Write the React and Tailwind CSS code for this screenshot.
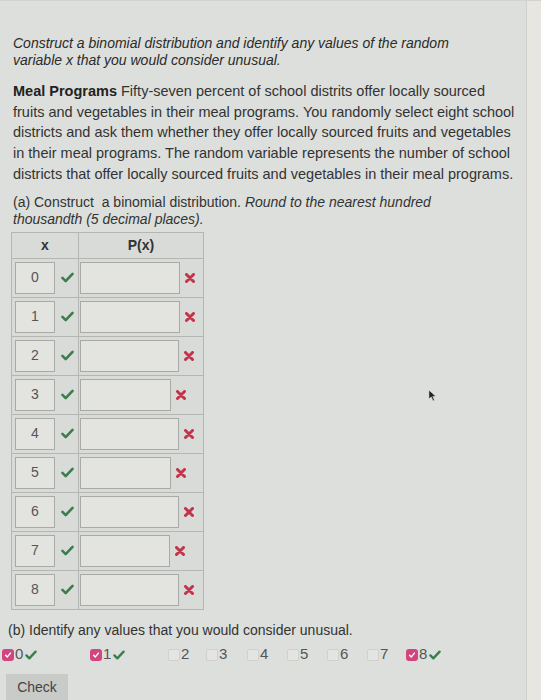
import React from 'react';

const font = { fontFamily: '"Liberation Sans", Arial, sans-serif' };

const Check = ({ className = '' }) => (
  <svg viewBox="0 0 14 12" className={className} fill="none">
    <path d="M1.5 6.5 L5 10 L12.5 2" stroke="#3c7d4c" strokeWidth="2.8" strokeLinecap="round" strokeLinejoin="round" />
  </svg>
);

const Cross = ({ className = '' }) => (
  <svg viewBox="0 0 10 10" className={className} fill="none">
    <path d="M1.5 1.5 L8.5 8.5 M8.5 1.5 L1.5 8.5" stroke="#c4334a" strokeWidth="3" strokeLinecap="round" />
  </svg>
);

const rows = [
  { x: 0, w: 100 },
  { x: 1, w: 100 },
  { x: 2, w: 99 },
  { x: 3, w: 91 },
  { x: 4, w: 99 },
  { x: 5, w: 91 },
  { x: 6, w: 99 },
  { x: 7, w: 90 },
  { x: 8, w: 99 },
];

const choices = [
  { v: 0, on: true, w: 'w-[88px]' },
  { v: 1, on: true, w: 'w-[78px]' },
  { v: 2, on: false, w: 'w-[38px]' },
  { v: 3, on: false, w: 'w-[41px]' },
  { v: 4, on: false, w: 'w-[40px]' },
  { v: 5, on: false, w: 'w-[40px]' },
  { v: 6, on: false, w: 'w-[40px]' },
  { v: 7, on: false, w: 'w-[39px]' },
  { v: 8, on: true, w: 'w-[40px]' },
];

function Row({ r }) {
  return (
    <div className="flex h-[39px] border-t border-[#b3b6b3]">
      <div className="flex w-[67px] items-center border-r border-[#b3b6b3] pl-[3px]">
        <div className="flex h-[32px] w-[40px] items-center justify-center border border-[#a8aaa7] bg-[#e3e4e0] text-[14px] text-[#555]">
          {r.x}
        </div>
        <Check className="ml-[6px] h-[11px] w-[13px]" />
      </div>
      <div className="flex flex-1 items-center pl-[1px]">
        <div className="h-[32px] border border-[#a8aaa7] bg-[#e3e4e0]" style={{ width: r.w }} />
        <Cross className="ml-[5px] h-[10px] w-[10px]" />
      </div>
    </div>
  );
}

export default function App() {
  return (
    <div className="relative flex h-[700px] w-[541px] flex-col overflow-hidden bg-[#e7e5e1] text-[#2b2b2b]" style={font}>
      <div className="h-[11px] border-b border-[#d2d3d0]" />
      <div className="flex flex-1">
        <div className="w-[526px] bg-[#dcdfdb] pl-[13px] pt-[34px]">
          <p className="text-[14px] italic leading-[17px]">
            Construct a binomial distribution and identify any values of the random
            <br />
            variable x that you would consider unusual.
          </p>
          <p className="mt-[12px] text-[14.5px] leading-[20.7px] text-[#333]">
            <strong className="font-bold text-[#222]">Meal Programs</strong> Fifty-seven percent of school distrits offer locally sourced
            <br />
            fruits and vegetables in their meal programs. You randomly select eight school
            <br />
            districts and ask them whether they offer locally sourced fruits and vegetables
            <br />
            in their meal programs. The random variable represents the number of school
            <br />
            districts that offer locally sourced fruits and vegetables in their meal programs.
          </p>
          <p className="mt-[9px] text-[14px] leading-[17px] text-[#333]">
            (a) Construct&nbsp; a binomial distribution. <em>Round to the nearest hundred</em>
            <br />
            <em>thousandth (5 decimal places).</em>
          </p>

          <div className="-ml-[2px] mt-[4px] w-[193px] border border-[#b3b6b3] bg-[#d8dbd7]">
            <div className="flex h-[25px] text-[14px] font-semibold text-[#333]">
              <div className="flex w-[67px] items-center justify-center border-r border-[#b3b6b3]">x</div>
              <div className="flex flex-1 items-center justify-center">P(x)</div>
            </div>
            {rows.map((r) => (
              <Row key={r.x} r={r} />
            ))}
          </div>

          <p className="-ml-[5px] mt-[12px] text-[14px] leading-[17px] text-[#333]">
            (b) Identify any values that you would consider unusual.
          </p>

          <div className="-ml-[11px] mt-[6px] flex h-[20px] items-center text-[15px] text-[#555]">
            {choices.map((c) => (
              <div key={c.v} className={`flex items-center ${c.w}`}>
                {c.on ? (
                  <span className="flex h-[12px] w-[12px] items-center justify-center rounded-[3px] bg-[#d2457f]">
                    <svg viewBox="0 0 10 10" className="h-[8px] w-[8px]" fill="none">
                      <path d="M2 5.2 L4.2 7.4 L8 2.6" stroke="#fff" strokeWidth="1.8" strokeLinecap="round" strokeLinejoin="round" />
                    </svg>
                  </span>
                ) : (
                  <span className="h-[12px] w-[12px] rounded-[2px] border border-[#cfd1ce] bg-[#e4e5e2]" />
                )}
                <span className="ml-[1px]">{c.v}</span>
                {c.on && <Check className="ml-[2px] h-[10px] w-[12px]" />}
              </div>
            ))}
          </div>

          <button className="-ml-[7px] mt-[9px] flex h-[28px] w-[62px] items-center justify-center bg-[#c9cbc8] text-[14px] text-[#444]">
            Check
          </button>
        </div>
        <div className="flex-1 border-l border-[#cfd0cc] bg-[#e8e6e1]" />
      </div>

      <svg viewBox="0 0 10 14" className="absolute left-[428px] top-[389px] h-[13px] w-[9px]">
        <path d="M1 1 L1 11 L3.6 8.6 L5.6 13 L7.2 12.2 L5.3 8 L8.8 8 Z" fill="#222" stroke="#eee" strokeWidth="0.6" />
      </svg>
    </div>
  );
}
